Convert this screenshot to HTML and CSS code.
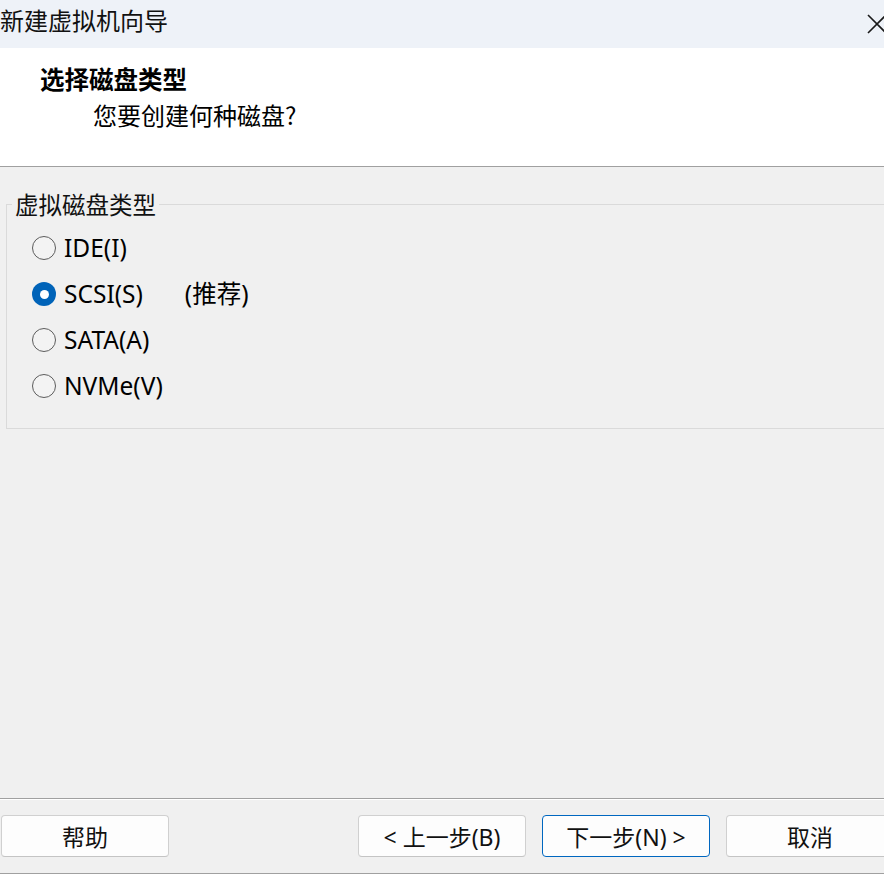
FILE: index.html
```html
<!DOCTYPE html>
<html lang="zh-CN">
<head>
<meta charset="utf-8">
<title>新建虚拟机向导</title>
<link rel="stylesheet" href="styles.css">
</head>
<body>
<div class="window">
  <div class="titlebar">
    <span class="title">新建虚拟机向导</span>
    <svg class="close" width="20" height="20" viewBox="0 0 20 20" aria-hidden="true">
      <path d="M1 1 L19 19 M19 1 L1 19" stroke="#1a1a1a" stroke-width="1.6" fill="none"/>
    </svg>
  </div>
  <div class="header">
    <div class="heading">选择磁盘类型</div>
    <div class="subheading">您要创建何种磁盘?</div>
  </div>
  <div class="content">
    <fieldset class="group">
      <legend class="legend">虚拟磁盘类型</legend>
      <div class="options">
        <div class="option"><span class="radio"></span><span class="label">IDE(I)</span></div>
        <div class="option"><span class="radio checked"></span><span class="label">SCSI(S)</span><span class="hint">(推荐)</span></div>
        <div class="option"><span class="radio"></span><span class="label">SATA(A)</span></div>
        <div class="option"><span class="radio"></span><span class="label">NVMe(V)</span></div>
      </div>
    </fieldset>
  </div>
  <div class="footer">
    <button class="btn help">帮助</button>
    <div class="nav">
      <button class="btn">&lt; 上一步(B)</button>
      <button class="btn default">下一步(N) &gt;</button>
      <button class="btn">取消</button>
    </div>
  </div>
</div>
</body>
</html>
```
FILE: styles.css
```css
html, body {
  margin: 0;
  padding: 0;
  background: #f0f0f0;
}
body {
  width: 884px;
  height: 874px;
  overflow: hidden;
  font-family: "Noto Sans", "Noto Sans CJK SC", sans-serif;
  color: #000;
}
.window {
  display: flex;
  flex-direction: column;
  height: 874px;
}
.titlebar {
  height: 48px;
  box-sizing: border-box;
  background: #eef2f8;
  display: flex;
  align-items: center;
  justify-content: space-between;
  padding-bottom: 8px;
}
.title {
  font-family: "Noto Sans CJK SC", sans-serif;
  font-size: 24px;
  line-height: 30px;
  color: #111;
}
.close {
  margin-right: -3px;
  margin-top: 8px;
  flex: none;
}
.header {
  box-sizing: border-box;
  background: #fff;
  border-bottom: 1px solid #a0a0a0;
  padding-top: 16px;
  height: 119px;
}
.heading {
  font-family: "Noto Sans CJK SC", sans-serif;
  font-size: 24.5px;
  font-weight: 700;
  line-height: 30px;
  padding-left: 40px;
}
.subheading {
  font-family: "Noto Sans CJK SC", sans-serif;
  font-size: 24px;
  line-height: 30px;
  margin-top: 6px;
  padding-left: 93px;
}
.content {
  flex: 1;
  padding-top: 25px;
  padding-left: 6px;
}
.group {
  margin: 0;
  padding: 0 0 19px 0;
  border: 1px solid #dadada;
  width: 900px;
  box-sizing: border-box;
}
.legend {
  font-family: "Noto Sans CJK SC", sans-serif;
  font-size: 23.5px;
  line-height: 24px;
  padding: 0 3px;
  margin-left: 5px;
  color: #111;
}
.options {
  padding: 9px 0 0 25px;
  display: flex;
  flex-direction: column;
}
.option {
  height: 46px;
  display: flex;
  align-items: center;
  font-size: 24.5px;
}
.radio {
  width: 24px;
  height: 24px;
  box-sizing: border-box;
  border-radius: 50%;
  border: 1.5px solid #5c5c5c;
  background: #f3f3f3;
  flex: none;
  display: flex;
  align-items: center;
  justify-content: center;
}
.radio.checked {
  border: none;
  background: #0063b8;
}
.radio.checked::after {
  content: "";
  width: 9px;
  height: 9px;
  border-radius: 50%;
  background: #fff;
}
.label {
  margin-left: 8px;
  line-height: 30px;
}
.hint {
  margin-left: 42px;
  line-height: 30px;
}
.footer {
  flex: none;
  height: 76px;
  box-sizing: border-box;
  border-top: 1px solid #a0a0a0;
  border-bottom: 1px solid #a0a0a0;
  box-shadow: inset 0 1px 0 #fff;
  padding: 16px 0 0 1px;
  display: flex;
  align-items: flex-start;
}
.nav {
  display: flex;
  gap: 16px;
  margin-left: 189px;
}
.btn {
  width: 168px;
  height: 42px;
  box-sizing: border-box;
  background: #fdfdfd;
  border: 1px solid #d0d0d0;
  border-bottom-color: #c4c4c4;
  border-radius: 4px;
  font-family: "Noto Sans", "Noto Sans CJK SC", sans-serif;
  font-size: 23px;
  color: #111;
  padding: 0;
  flex: none;
}
.btn.default {
  border-color: #0067c0;
}
```
